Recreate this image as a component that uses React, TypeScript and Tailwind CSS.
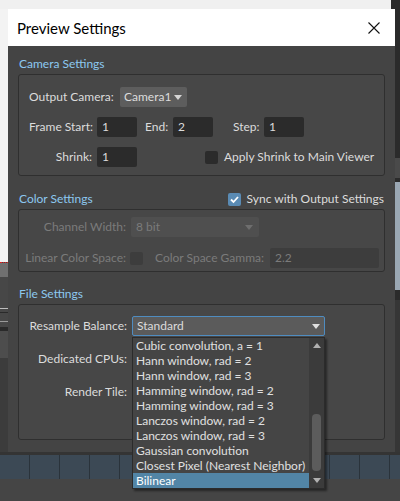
import React from "react";

function Arrow({ color = "#d6d6d6", up = false }: { color?: string; up?: boolean }) {
  return (
    <svg width="8" height="5" viewBox="0 0 8 5" className="block">
      <path d={up ? "M0 5H8L4 0Z" : "M0 0H8L4 5Z"} fill={color} />
    </svg>
  );
}

function Input({ value, w = "w-[40px]" }: { value: string; w?: string }) {
  return (
    <div className={`${w} h-[20px] bg-[#2b2b2b] rounded-[2px] pl-[5px] flex items-center text-[#dcdcdc]`}>
      {value}
    </div>
  );
}

function Check({ checked = false, disabled = false }: { checked?: boolean; disabled?: boolean }) {
  return (
    <div
      className={`w-[13px] h-[13px] rounded-[2px] flex items-center justify-center shrink-0 ${
        checked ? "bg-[#5a8bb4]" : disabled ? "bg-[#3d3d3d]" : "bg-[#2b2b2b]"
      }`}
    >
      {checked && (
        <svg width="11" height="11" viewBox="0 0 11 11">
          <path d="M2 5.5L4.5 8L9 3" stroke="#ffffff" strokeWidth="1.8" fill="none" />
        </svg>
      )}
    </div>
  );
}

const items = [
  "Cubic convolution, a = 1",
  "Hann window, rad = 2",
  "Hann window, rad = 3",
  "Hamming window, rad = 2",
  "Hamming window, rad = 3",
  "Lanczos window, rad = 2",
  "Lanczos window, rad = 3",
  "Gaussian convolution",
  "Closest Pixel (Nearest Neighbor)",
  "Bilinear",
];

export default function App() {
  return (
    <div className="relative w-[400px] h-[501px] overflow-hidden bg-[#454545] flex flex-col font-[Lato,sans-serif] text-[12px] leading-[16px] whitespace-nowrap">
      {/* background application */}
      <div className="h-[9px] flex shrink-0">
        <div className="flex-1 bg-[#f0f0f0]" />
        <div className="w-[9px] bg-[#2b2b2b]" />
      </div>
      <div className="h-[443px] flex shrink-0">
        <div className="w-[8px] flex flex-col">
          <div className="h-[253px] bg-[#f3f3f3]" />
          <div className="h-[1px] border-t border-dotted border-[#e02020]" />
          <div className="h-[14px] bg-[#707070]" />
          <div className="h-[31px] bg-[#474747]" />
          <div className="h-[1px] bg-[#bdbdbd]" />
          <div className="h-[3px] bg-[#474747]" />
          <div className="h-[1px] bg-[#2a2a2a]" />
          <div className="h-[8px] bg-[#474747]" />
          <div className="h-[1px] bg-[#9a9a9a]" />
          <div className="h-[5px] bg-[#474747]" />
          <div className="h-[4px] bg-[#2a2a2a]" />
          <div className="h-[27px] bg-[#4d4d4d]" />
          <div className="flex-1 bg-[#3c3c3c]" />
        </div>
        <div className="flex-1" />
        <div className="w-[5px] flex flex-col">
          <div className="h-[149px] bg-[#2b2b2b]" />
          <div className="h-[20px] bg-[#4a4a4a]" />
          <div className="h-[4px] bg-[#2b2b2b]" />
          <div className="h-[108px] bg-[#9aa7b3]" />
          <div className="h-[10px] bg-[#2b2b2b]" />
          <div className="flex-1 bg-[#363636]" />
        </div>
      </div>
      <div className="h-[3px] bg-[#343434] shrink-0" />
      <div className="h-[24px] flex bg-[#3c4955] shrink-0 overflow-hidden">
        {Array.from({ length: 14 }).map((_, i) => (
          <div key={i} className="w-[30px] shrink-0 border-r border-[#2a333b]" />
        ))}
      </div>
      <div className="flex-1 bg-[#454545]" />

      {/* dialog */}
      <div className="absolute left-[8px] top-[9px] w-[387px] h-[443px] flex flex-col bg-[#444444]">
        <div className="h-[37px] bg-white flex items-center justify-between pl-[9px] pr-[15px] shrink-0">
          <span className="text-[15px] text-black leading-[20px]">Preview Settings</span>
          <svg width="12" height="12" viewBox="0 0 12 12">
            <path d="M0.5 0.5L11.5 11.5M11.5 0.5L0.5 11.5" stroke="#111" strokeWidth="1.1" />
          </svg>
        </div>
        <div className="flex-1 px-[10px] pt-[10px] flex flex-col">
          {/* Camera settings */}
          <div className="h-[16px] pl-px text-[#8cc8f0]">Camera Settings</div>
          <div className="mt-[2px] h-[102px] border border-[#2f2f2f] rounded-[3px] bg-[#474747] pt-[12px] pl-[10px] flex flex-col gap-[10px] text-[#dcdcdc]">
            <div className="h-[20px] flex items-center">
              <div className="w-[91px]">Output Camera:</div>
              <div className="w-[67px] h-[20px] bg-[#5d5d5d] rounded-[2px] pl-[4px] pr-[5px] flex items-center justify-between">
                <span>Camera1</span>
                <Arrow />
              </div>
            </div>
            <div className="h-[20px] flex items-center">
              <div className="w-[63px] text-right">Frame Start:</div>
              <div className="ml-[5px]"><Input value="1" /></div>
              <div className="ml-[8px] w-[28px]">End:</div>
              <Input value="2" />
              <div className="ml-[20px] w-[31px]">Step:</div>
              <Input value="1" />
            </div>
            <div className="h-[20px] flex items-center">
              <div className="w-[63px] text-right">Shrink:</div>
              <div className="ml-[5px]"><Input value="1" /></div>
              <div className="ml-[68px]"><Check /></div>
              <div className="ml-[6px]">Apply Shrink to Main Viewer</div>
            </div>
          </div>

          {/* Color settings */}
          <div className="mt-[15px] h-[16px] pl-px flex items-center justify-between">
            <span className="text-[#8cc8f0]">Color Settings</span>
            <div className="flex items-center pr-px">
              <Check checked />
              <span className="ml-[6px] text-[#dcdcdc]">Sync with Output Settings</span>
            </div>
          </div>
          <div className="mt-[2px] h-[63px] border border-[#2f2f2f] rounded-[3px] bg-[#474747] pt-[7px] pl-[5px] flex flex-col gap-[11px] text-[#7b7b7b]">
            <div className="h-[20px] flex items-center">
              <div className="w-[102px] text-right">Channel Width:</div>
              <div className="ml-[5px] w-[128px] h-[20px] bg-[#4f4f4f] rounded-[2px] pl-[5px] pr-[6px] flex items-center justify-between">
                <span>8 bit</span>
                <Arrow color="#6e6e6e" />
              </div>
            </div>
            <div className="h-[20px] flex items-center">
              <div className="w-[102px] text-right">Linear Color Space:</div>
              <div className="ml-[4px]"><Check disabled /></div>
              <div className="ml-[12px] w-[115px]">Color Space Gamma:</div>
              <Input value="2.2" w="w-[109px] !bg-[#3d3d3d] !text-[#7b7b7b]" />
            </div>
          </div>

          {/* File settings */}
          <div className="mt-[14px] h-[16px] pl-px text-[#8cc8f0]">File Settings</div>
          <div className="mt-[2px] h-[136px] border border-[#2f2f2f] rounded-[3px] bg-[#474747] pt-[11px] pl-[10px] flex flex-col gap-[13px] text-[#dcdcdc]">
            <div className="h-[20px] flex items-center">
              <div className="w-[98px] text-right">Resample Balance:</div>
              <div className="ml-[5px] relative w-[193px] h-[20px]">
                <div className="w-full h-full bg-[#5b5b5b] border border-[#4f8cc0] rounded-[2px] pl-[4px] pr-[4px] flex items-center justify-between">
                  <span>Standard</span>
                  <Arrow color="#e0e0e0" />
                </div>
                <div className="absolute left-0 top-[21px] w-[193px] h-[152px] border border-[#2b2b2b] bg-[#454545] flex shadow-[2px_2px_2px_rgba(0,0,0,0.45)] z-10">
                  <div className="flex-1 flex flex-col">
                    {items.map((t, i) => (
                      <div
                        key={t}
                        className={`h-[15px] leading-[15px] pl-[3px] ${
                          i === items.length - 1 ? "bg-[#5285a6] text-white" : "text-[#e0e0e0]"
                        }`}
                      >
                        {t}
                      </div>
                    ))}
                  </div>
                  <div className="w-[15px] bg-[#3b3b3b] flex flex-col items-center">
                    <div className="h-[15px] flex items-center justify-center"><Arrow color="#b0b0b0" up /></div>
                    <div className="flex-1 flex flex-col justify-end pb-[2px]">
                      <div className="w-[9px] h-[57px] rounded-[4px] bg-[#5c5c5c]" />
                    </div>
                    <div className="h-[15px] flex items-center justify-center"><Arrow color="#b0b0b0" /></div>
                  </div>
                </div>
              </div>
            </div>
            <div className="h-[20px] flex items-center">
              <div className="w-[98px] text-right">Dedicated CPUs:</div>
            </div>
            <div className="h-[20px] flex items-center">
              <div className="w-[98px] text-right">Render Tile:</div>
            </div>
          </div>
        </div>
      </div>
    </div>
  );
}
